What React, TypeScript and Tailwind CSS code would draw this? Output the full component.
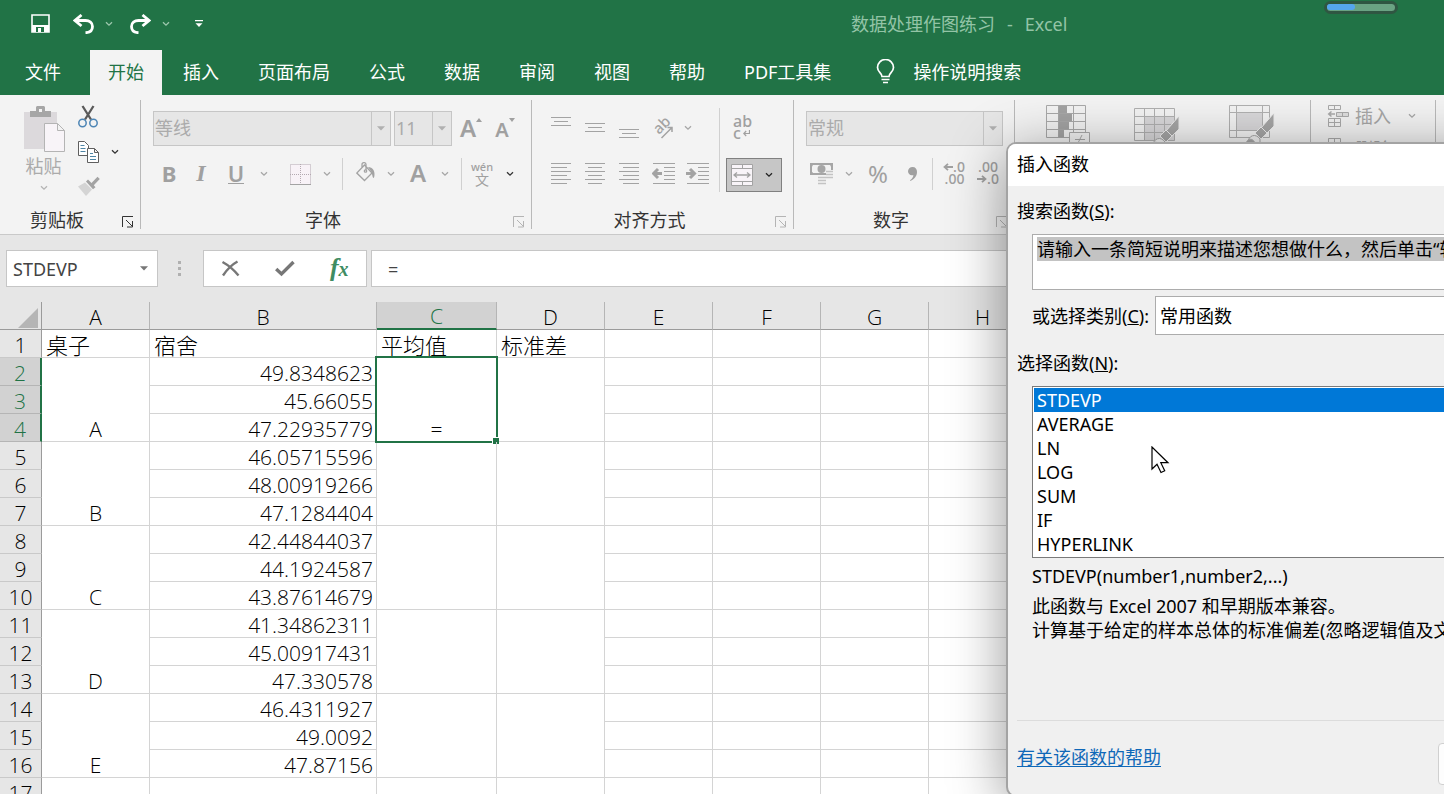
import { useEffect, useRef, useState, type ReactNode } from "react";

const TABS = ["开始", "插入", "页面布局", "公式", "数据", "审阅", "视图", "帮助", "PDF工具集"];

const COLUMNS = [
  { id: "A", width: "w-[108px]" },
  { id: "B", width: "w-[227px]" },
  { id: "C", width: "w-[120px]" },
  { id: "D", width: "w-[108px]" },
  { id: "E", width: "w-[108px]" },
  { id: "F", width: "w-[108px]" },
  { id: "G", width: "w-[108px]" },
  { id: "H", width: "w-[108px]" },
];

// Each desk has three measurements, its own cells are merged over three rows
const DESKS = [
  { name: "A", values: ["49.8348623", "45.66055", "47.22935779"] },
  { name: "B", values: ["46.05715596", "48.00919266", "47.1284404"] },
  { name: "C", values: ["42.44844037", "44.1924587", "43.87614679"] },
  { name: "D", values: ["41.34862311", "45.00917431", "47.330578"] },
  { name: "E", values: ["46.4311927", "49.0092", "47.87156"] },
];

const FUNCTIONS = ["STDEVP", "AVERAGE", "LN", "LOG", "SUM", "IF", "HYPERLINK"];

const UI_FONT = "font-['Noto_Sans','Noto_Sans_CJK_SC',sans-serif]";

function Chevron({ className = "text-[#a6a6a6]" }: { className?: string }) {
  return (
    <svg width="8" height="6" viewBox="0 0 8 6" fill="none" stroke="currentColor" strokeWidth="1.3" className={className}>
      <path d="M1 1.2 4 4.2 7 1.2" />
    </svg>
  );
}

function Caret({ className = "text-[#b0b0b0]" }: { className?: string }) {
  return (
    <svg width="8" height="5" viewBox="0 0 8 5" fill="currentColor" className={className}>
      <path d="M0 .3h8L4 4.5z" />
    </svg>
  );
}

function Tool({ label, className, children }: { label: string; className: string; children: ReactNode }) {
  return (
    <button type="button" aria-label={label} className={`flex h-9 shrink-0 items-center justify-center ${className}`}>
      {children}
    </button>
  );
}

function Divider() {
  return <span className="h-8 w-px shrink-0 bg-[#d0d0d0]" />;
}

function Launcher({ className = "text-[#b4b4b4]" }: { className?: string }) {
  return (
    <svg width="12" height="12" viewBox="0 0 12 12" fill="none" stroke="currentColor" className={className}>
      <path d="M.5 11V.5H11M4 4l6.5 6.5M10.500 5v6H5" />
    </svg>
  );
}

function Group({ label, className, launcher, children }: { label?: string; className: string; launcher?: string; children: ReactNode }) {
  return (
    <section className={`my-[5px] flex shrink-0 flex-col justify-between border-r border-[#b9b9b9] ${className}`}>
      <div className="pl-3">{children}</div>
      {label && (
        <div className="flex h-[18px] items-center">
          <span className="flex-1 pr-2 text-center text-lg leading-5 text-[#333]">{label}</span>
          <button type="button" aria-label={`${label}设置`} className="flex w-[18px] justify-start pt-1">
            <Launcher className={launcher} />
          </button>
        </div>
      )}
    </section>
  );
}

function DropBox({ label, value, className }: { label: string; value: string; className: string }) {
  return (
    <div className={`flex h-[35px] shrink-0 border border-[#c6c6c6] bg-[#e6e6e6] ${className}`}>
      <select aria-label={label} className="min-w-0 flex-1 appearance-none bg-transparent pl-px text-lg text-[#ababab] outline-none">
        <option>{value}</option>
      </select>
      <span className="flex w-[19px] items-center justify-center border-l border-[#c6c6c6]">
        <Caret />
      </span>
    </div>
  );
}

// A stack of lines, each one given as [x start, x end]
function Lines({ rows, top = 0, step = 5 }: { rows: number[][]; top?: number; step?: number }) {
  return (
    <svg width="20" height="21" viewBox="0 0 20 21" stroke="#a3a3a3" shapeRendering="crispEdges">
      {rows.map(([a, b], i) => (
        <path key={i} d={`M${a} ${top + i * step + 0.5}H${b}`} />
      ))}
    </svg>
  );
}

function IndentIcon({ right = false }: { right?: boolean }) {
  return (
    <svg width="23" height="21" viewBox="0 0 23 21" stroke="#a3a3a3">
      <path shapeRendering="crispEdges" d="M1 .5h22M12 4.500h11M12 8.500h11M12 12.500h11M12 16.500h11M1 20.500h22" />
      <path fill="none" strokeWidth="3" d={right ? "M0 10.500h8M4 6l4.500 4.500L4 15" : "M10 10.500H2M6 6l-4.500 4.500L6 15"} />
    </svg>
  );
}

function TitleBar() {
  return (
    <header className="flex h-[50px] items-center pb-[3px] text-white">
      <div className="flex w-[851px] shrink-0 items-center pl-[31px]">
        <button type="button" aria-label="保存">
          <svg width="19" height="19" viewBox="0 0 19 19" fill="none" stroke="#fff" strokeWidth="1.6">
            <path d="M1 1h17v17H1z" />
            <path fill="#fff" stroke="none" d="M1 11h17v7H1z" />
            <path fill="#217346" stroke="none" d="M5 13h8v5H5z" />
            <path fill="#fff" stroke="none" d="M7 14h3v4H7z" />
          </svg>
        </button>
        <button type="button" aria-label="撤消" className="ml-[23px]">
          <svg width="21" height="20" viewBox="0 0 21 20" fill="none" stroke="#fff" strokeWidth="2.800">
            <path d="M8.500 1 2 6.500 8.500 12M2.500 6.500h10c4 0 7 2.500 7 6s-2.500 6-7 6.200" />
          </svg>
        </button>
        <button type="button" aria-label="撤消列表" className="ml-[11px]"><Chevron className="text-[#9cc7ad]" /></button>
        <button type="button" aria-label="恢复" className="ml-[17px]">
          <svg width="21" height="20" viewBox="0 0 21 20" fill="none" stroke="#fff" strokeWidth="2.800">
            <path d="M12.500 1 19 6.500 12.500 12M18.500 6.500h-10c-4 0-7 2.500-7 6s2.500 6 7 6.200" />
          </svg>
        </button>
        <button type="button" aria-label="恢复列表" className="ml-[11px]"><Chevron className="text-[#9cc7ad]" /></button>
        <button type="button" aria-label="自定义快速访问工具栏" className="ml-[25px]">
          <svg width="8" height="8" viewBox="0 0 8 8" fill="#fff"><path d="M0 0h8v1.300H0zM.5 3.200h7L4 7z" /></svg>
        </button>
      </div>
      <h1 className="flex gap-3 text-lg whitespace-nowrap text-[#93c4a6]">
        <span>数据处理作图练习</span>
        <span>-</span>
        <span>Excel</span>
      </h1>
    </header>
  );
}

function TabBar() {
  const [active, setActive] = useState("开始");
  return (
    <nav className="flex h-[45px] items-stretch text-lg text-white">
      <button type="button" className="mr-1 w-[86px] pb-[2px]">文件</button>
      <div className="flex gap-[3px]">
        {TABS.map((tab) => (
          <button
            key={tab}
            type="button"
            onClick={() => setActive(tab)}
            className={`px-[18px] pb-[2px] whitespace-nowrap ${active === tab ? "bg-[#f3f3f3] text-[#217346]" : ""}`}
          >
            {tab}
          </button>
        ))}
      </div>
      <button type="button" className="ml-[27px] flex items-center gap-[18px] pb-[2px] whitespace-nowrap">
        <svg width="19" height="25" viewBox="0 0 19 25" fill="none" stroke="#fff" strokeWidth="1.700">
          <path d="M6 17.500c0-3.500-4.500-4.500-4.500-9a8 8 0 0 1 16 0c0 4.500-4.500 5.500-4.500 9zM5.500 20.500h8M7 23.500h5" />
        </svg>
        操作说明搜索
      </button>
    </nav>
  );
}

function ClipboardGroup() {
  return (
    <Group label="剪贴板" className="w-[141px]" launcher="text-[#333]">
      <div className="flex">
        <button type="button" className="flex w-[63px] flex-col items-center pt-[6px] text-lg leading-6 text-[#ababab]">
          <svg width="42" height="46" viewBox="0 0 42 46">
            <path fill="#dcd9dc" d="M1 6h33v37H1z" />
            <path fill="#a6a6a6" d="M7 5h6V1.500C13 .7 13.700 0 14.500 0h6c.8 0 1.500.7 1.500 1.500V5h6v6H7zM16 3v3h3V3z" />
            <path fill="#f8f4f8" stroke="#b4b4b4" d="M21.500 17.500h13l7 7v21h-20zM34.500 17.500v7h7" />
          </svg>
          <span className="mt-[2px]">粘贴</span>
          <span className="mt-[7px]"><Chevron className="text-[#b4b4b4]" /></span>
        </button>
        <div className="flex flex-col gap-[13px] pt-[5px] pl-[3px]">
          <button type="button" aria-label="剪切">
            <svg width="20" height="23" viewBox="0 0 20 23" fill="none">
              <path stroke="#5a5a5a" strokeWidth="2.300" d="M4.500 1 13 14.500M15.500 1 7 14.500" />
              <circle cx="4.500" cy="18" r="3.700" stroke="#4d85b5" strokeWidth="1.500" />
              <circle cx="15.500" cy="18" r="3.700" stroke="#4d85b5" strokeWidth="1.500" />
            </svg>
          </button>
          <button type="button" aria-label="复制" className="flex items-center gap-3">
            <svg width="21" height="22" viewBox="0 0 21 22" fill="#fff" stroke="#5f5f5f">
              <path d="M.5.5h6l4 4v10H.5z" />
              <path stroke="#4f86a6" d="M2.500 4.500h4M2.500 7.500h5M2.500 10.500h5" />
              <path d="M9.500 7.500h7l4 4v10h-11zM16.500 7.500v4h4" />
              <path stroke="#4f86a6" d="M12 12.500h3M12 15.500h6M12 18.500h6" />
            </svg>
            <Chevron className="text-[#333]" />
          </button>
          <button type="button" aria-label="格式刷">
            <svg width="22" height="21" viewBox="0 0 22 21">
              <path fill="#d4d4d4" d="M0 10.500 7 6.500l7 7L8 20z" />
              <path fill="#a3a3a3" d="m8 5.500 2-2 3.500 3.500L19.500.7l2.300 2.300-6 6.200 1.700 2-2.500 2z" />
            </svg>
          </button>
        </div>
      </div>
    </Group>
  );
}

function FontGroup() {
  return (
    <Group label="字体" className="w-[391px]">
      <div className="flex h-14 items-center">
        <DropBox label="字体名称" value="等线" className="w-[238px]" />
        <DropBox label="字号" value="11" className="ml-[3px] w-[58px]" />
        <Tool label="增大字号" className="ml-1 w-[30px]">
          <span className="text-2xl leading-6 font-semibold text-[#a0a0a0]">A</span>
          <svg width="6" height="4" viewBox="0 0 6 4" className="mb-4" fill="#a0a0a0"><path d="M0 4h6L3 0z" /></svg>
        </Tool>
        <Tool label="减小字号" className="ml-1 w-[30px]">
          <span className="pt-1 text-xl leading-5 font-semibold text-[#a0a0a0]">A</span>
          <svg width="6" height="4" viewBox="0 0 6 4" className="mb-4" fill="#a0a0a0"><path d="M0 0h6L3 4z" /></svg>
        </Tool>
      </div>
      <div className="flex h-9 items-center text-[#a0a0a0]">
        <Tool label="加粗" className="w-8 pb-[2px] text-[22px] font-bold">B</Tool>
        <Tool label="倾斜" className="w-8 pb-[2px] font-['Liberation_Serif',serif] text-2xl font-bold italic">I</Tool>
        <Tool label="下划线" className="w-[38px] pb-[2px]">
          <span className="border-b border-[#a0a0a0] text-[22px] leading-5 font-semibold">U</span>
        </Tool>
        <Tool label="下划线样式" className="w-[18px]"><Chevron /></Tool>
        <Tool label="边框" className="ml-2 w-[38px]">
          <svg width="21" height="21" viewBox="0 0 21 21" fill="none" stroke="#b3a9b0">
            <path fill="#f8f2f7" strokeDasharray="1 1" d="M.5.5h20v20H.5zM10.500 0v20M0 10.500h21" />
            <path stroke="#a3a3a3" d="M0 20.500h21" />
          </svg>
        </Tool>
        <Tool label="边框样式" className="mr-[7px] w-4"><Chevron /></Tool>
        <Divider />
        <Tool label="填充颜色" className="ml-1 w-9 pb-1">
          <svg width="19" height="20" viewBox="0 0 19 20" fill="none" stroke="#a3a3a3" strokeWidth="1.300">
            <path d="m8.500 3 7.500 8-7.500 7.500-7.700-7.500zM6 6V2.500C6 0 10 0 10 2.500V8" />
            <path fill="#a3a3a3" stroke="none" d="M12 5c5 0 6.500 4 6.500 7 0 2.500-.5 4-1 4-1.500-1-1-5-3-7.500z" />
            <circle cx="9.500" cy="9" r="1.200" />
          </svg>
        </Tool>
        <Tool label="填充颜色列表" className="w-4"><Chevron /></Tool>
        <Tool label="字体颜色" className="ml-1 w-[30px] pb-[2px] text-2xl font-semibold">A</Tool>
        <Tool label="字体颜色列表" className="mr-2 ml-1 w-4"><Chevron /></Tool>
        <Divider />
        <Tool label="拼音" className="w-10 flex-col">
          <span className="text-[11px] leading-3 font-medium">wén</span>
          <span className="text-sm leading-[14px]">文</span>
        </Tool>
        <Tool label="拼音列表" className="w-4"><Chevron className="text-[#333]" /></Tool>
      </div>
    </Group>
  );
}

function AlignGroup() {
  const short = [[0, 20], [3, 17], [0, 20]];
  return (
    <Group label="对齐方式" className="w-[262px]">
      <div className="flex">
        <div className="w-[175px]">
          <div className="flex h-14 items-center">
            <Tool label="顶端对齐" className="w-[34px] pb-[2px]"><Lines rows={short} top={0} step={4} /></Tool>
            <Tool label="垂直居中" className="w-[34px] pb-[2px]"><Lines rows={short} top={6} step={4} /></Tool>
            <Tool label="底端对齐" className="w-[34px] pb-[2px]"><Lines rows={short} top={12} step={4} /></Tool>
            <Tool label="方向" className="w-[34px]">
              <svg width="22" height="22" viewBox="0 0 22 22" fill="none" stroke="#a3a3a3" strokeWidth="1.500">
                <path d="M9.500 21 20 10.500M15.500 10.500H20V15" />
                <text x="0" y="0" transform="translate(7 18) rotate(-45)" fontSize="15" fontWeight="500" fill="#a3a3a3" stroke="none">ab</text>
              </svg>
            </Tool>
            <Tool label="方向列表" className="w-4"><Chevron /></Tool>
          </div>
          <div className="flex h-9 items-center">
            <Tool label="左对齐" className="w-[34px] pb-[2px]"><Lines rows={[[0, 20], [0, 16], [0, 20], [0, 16], [0, 20], [0, 16]]} step={4} /></Tool>
            <Tool label="居中" className="w-[34px] pb-[2px]"><Lines rows={[[0, 20], [3, 17], [0, 20], [3, 17], [0, 20], [3, 17]]} step={4} /></Tool>
            <Tool label="右对齐" className="w-[34px] pb-[2px]"><Lines rows={[[0, 20], [4, 20], [0, 20], [4, 20], [0, 20], [4, 20]]} step={4} /></Tool>
            <Tool label="减少缩进量" className="w-[34px] pb-[2px]"><IndentIcon /></Tool>
            <Tool label="增加缩进量" className="w-[34px] pb-[2px]"><IndentIcon right /></Tool>
          </div>
        </div>
        <span className="mt-2 w-px bg-[#d0d0d0]" />
        <div className="pl-[6px]">
          <div className="flex h-14 items-center">
            <Tool label="自动换行" className="w-8 flex-col items-start pb-[2px] pl-[7px] text-base font-medium text-[#a0a0a0]">
              <span className="leading-3">ab</span>
              <span className="flex items-center gap-[2px] leading-3">
                c
                <svg width="7" height="7" viewBox="0 0 7 7" fill="none" stroke="currentColor" strokeWidth="1.200"><path d="M6.500 0v3.500H1M3.200 1 .8 3.500 3.200 6" /></svg>
              </span>
            </Tool>
          </div>
          <button type="button" aria-label="合并后居中" className="mt-[2px] flex h-[34px] w-14 items-center gap-3 border border-[#808080] bg-[#c6c6c6] pl-1">
            <svg width="22" height="22" viewBox="0 0 22 22" fill="#f8f4f8" stroke="#a3a3a3">
              <path d="M.5.500h21v21H.5zM0 4.500h22M0 17.500h22M11.500 0v4.500M11.500 17.500V22" />
              <path strokeWidth="1.300" d="M3 11h16M6 8.500 3 11l3 2.500M16 8.500l3 2.500-3 2.500" fill="none" />
            </svg>
            <Chevron className="text-[#222]" />
          </button>
        </div>
      </div>
    </Group>
  );
}

function NumberGroup() {
  return (
    <Group label="数字" className="w-[221px]">
      <div className="flex h-14 items-center">
        <DropBox label="数字格式" value="常规" className="w-[197px]" />
      </div>
      <div className="flex h-9 items-center text-[#a0a0a0]">
        <Tool label="会计数字格式" className="w-8">
          <svg width="24" height="22" viewBox="0 0 24 22">
            <path fill="#a6a6a6" d="M0 0h23v12H0z" />
            <path fill="#f3f3f3" d="M3 2h17l1 1.500v5L20 10H3L2 8.500v-5z" />
            <circle cx="11.500" cy="6" r="4" fill="#a6a6a6" />
            <path stroke="#f3f3f3" strokeWidth="4" d="M8 15h10M16 9h8" />
            <path stroke="#c3c3c3" strokeWidth="1.500" d="M16 8.500h7M16 11.500h7M16 14.500h7M8 14.500h8M8 17.500h8M8 20.500h8" />
          </svg>
        </Tool>
        <Tool label="会计数字格式列表" className="w-[22px]"><Chevron /></Tool>
        <Tool label="百分比样式" className="w-9 text-2xl">%</Tool>
        <Tool label="千位分隔样式" className="mr-1 w-8">
          <svg width="9" height="14" viewBox="0 0 9 14" fill="#a0a0a0"><path d="M4.500 0C7.500 0 9 2 9 5c0 4-3 7.500-6.500 9L2 13.200C4.500 11.500 5.500 9.500 5.300 8 2.500 9 0 7 0 4.300 0 2 2 0 4.500 0z" /></svg>
        </Tool>
        <Divider />
        <Tool label="增加小数位数" className="ml-1 w-[34px] flex-col pb-[2px] text-sm font-medium">
          <span className="flex items-center leading-3">
            <svg width="10" height="8" viewBox="0 0 10 8" fill="none" stroke="currentColor" strokeWidth="1.800"><path d="M10 4H2M5 .8 1.500 4 5 7.200" /></svg>
            .0
          </span>
          <span className="pl-px leading-3">.00</span>
        </Tool>
        <Tool label="减少小数位数" className="w-[34px] flex-col pb-[2px] text-sm font-medium">
          <span className="leading-3">.00</span>
          <span className="flex items-center leading-3">
            <svg width="10" height="8" viewBox="0 0 10 8" fill="none" stroke="currentColor" strokeWidth="1.800"><path d="M0 4h8M5 .8 8.500 4 5 7.200" /></svg>
            .0
          </span>
        </Tool>
      </div>
    </Group>
  );
}

function Brush() {
  return (
    <>
      <path fill="#a6a6a6" stroke="#f0f0f0" d="M45 8v13l-7 7-6-5z" />
      <path fill="#a6a6a6" stroke="#f0f0f0" d="m32 22 6 6-6 6-6-6z" />
      <path fill="#f0f0f0" stroke="#a6a6a6" d="M19 38c0-8 8-10 12-4v4z" />
      <path fill="#a6a6a6" d="M17 38c2-5 7-5 9 0z" />
    </>
  );
}

function StylesGroup() {
  return (
    <Group className="w-[296px]">
      <div className="flex items-start pt-[5px] pl-[19px]">
        <button type="button" aria-label="条件格式">
          <svg width="45" height="38" viewBox="0 0 45 38" fill="none" stroke="#a9a9a9">
            <path fill="#f3f3f3" d="M.5.500h39v32H.5zM.5 8.500h39M.5 16.500h39M.5 24.500h39M12.500.5v32M27.500.5v32" />
            <path fill="#a3a3a3" stroke="none" d="M13 1h8v7h-8zM13 9h13v7H13zM13 17h10v7H13zM13 25h5v7h-5z" />
            <path fill="#f3f3f3" d="M23.500 27.500h20v14h-20zM29 34.500h10M36 30l-5 10" />
          </svg>
        </button>
        <button type="button" aria-label="套用表格格式" className="ml-[43px] pt-[3px]">
          <svg width="46" height="38" viewBox="0 0 46 38" fill="none" stroke="#b0b0b0">
            <path fill="#d9d8da" stroke="none" d="M11 9h30v24H11z" />
            <path d="M.5.500h40v32H.5zM.5 8.500h40M.5 16.500h40M.5 24.500h40M10.500.5v32M20.500.5v32M30.500.5v32" />
            <Brush />
          </svg>
        </button>
        <button type="button" aria-label="单元格样式" className="ml-[49px]">
          <svg width="46" height="38" viewBox="0 0 46 38" fill="none" stroke="#b0b0b0">
            <path fill="#d9d8da" stroke="none" d="M8 8h26v18H8z" />
            <path d="M.5.500h40v32H.5zM.5 7.500h40M.5 25.500h40M7.500.5v32M33.500.5v32" />
            <Brush />
          </svg>
        </button>
      </div>
    </Group>
  );
}

function CellsIcon() {
  return (
    <svg width="23" height="22" viewBox="0 0 23 22" fill="none" stroke="#a9a9a9">
      <path d="M1.500.5h12v4h-12zM7.500.5v4M1.500 13.500h12v8h-12zM1.500 17.500h12M7.500 13.500v8" />
      <path fill="#dedede" d="M9.500 7.500h12v4h-12zM15.500 7.500v4" />
      <path strokeWidth="1.500" d="M8 9H2M4.500 6.500 1.700 9l2.800 2.500" />
    </svg>
  );
}

function CellsGroup() {
  return (
    <Group className="w-[125px]">
      <div className="flex flex-col gap-[9px] pt-1 pl-1 text-lg leading-6 text-[#a6a6a6]">
        {["插入", "删除"].map((name) => (
          <button key={name} type="button" className="flex items-center gap-[5px] whitespace-nowrap">
            <CellsIcon />
            {name}
            <Chevron className="ml-3 text-[#a6a6a6]" />
          </button>
        ))}
      </div>
    </Group>
  );
}

function FormulaBar() {
  const box = "flex h-[37px] shrink-0 items-center border border-[#c6c6c6] bg-white";
  return (
    <div className="flex items-center py-[15px] pl-[6px] text-[#444]">
      <div className={`${box} w-[152px]`}>
        <input aria-label="名称框" defaultValue="STDEVP" className="min-w-0 flex-1 pl-[6px] text-lg outline-none" />
        <button type="button" aria-label="名称列表" className="px-[9px]"><Caret className="text-[#777]" /></button>
      </div>
      <svg width="45" height="16" viewBox="0 0 45 16" fill="#b0b0b0">
        <path d="M20 0h3v3h-3zM20 6h3v3h-3zM20 12h3v3h-3z" />
      </svg>
      <div className={`${box} w-[164px] justify-around`}>
        <button type="button" aria-label="取消">
          <svg width="19" height="17" viewBox="0 0 19 17" fill="none" stroke="#777" strokeWidth="2.400"><path d="M1.500 2C7 5 13 10 17.500 15.500M16.500 1.500C11 4.500 6 9.500 2 15.500" /></svg>
        </button>
        <button type="button" aria-label="输入">
          <svg width="20" height="17" viewBox="0 0 20 17" fill="none" stroke="#777" strokeWidth="3.400"><path d="M1.200 9 6.500 14 18.500 2" /></svg>
        </button>
        <button type="button" aria-label="插入函数" className="font-['Liberation_Serif',serif] text-[26px] leading-7 font-bold text-[#3f8c62] italic">
          f<span className="text-xl">x</span>
        </button>
      </div>
      <div className={`${box} ml-1 flex-1 shrink`}>
        <input aria-label="编辑栏" defaultValue="=" className="min-w-0 flex-1 pl-4 text-lg outline-none" />
      </div>
    </div>
  );
}

const CELL = "h-7 border-r border-b border-[#d4d4d4] pt-1";

function RowHead({ row }: { row: number }) {
  const picked = row >= 2 && row <= 4;
  return (
    <th
      scope="row"
      className={`h-7 border-b px-0 pt-1 pb-0 text-center font-light ${picked ? "border-r-2 border-r-[#217346] border-b-[#b5b5b5] bg-[#d2d2d2] text-[#217346]" : "border-r border-r-[#9b9b9b] border-b-[#c9c9c9] bg-[#e6e6e6]"}`}
    >
      {row}
    </th>
  );
}

function EmptyCells({ from }: { from: number }) {
  return (
    <>
      {COLUMNS.slice(from).map((c) => <td key={c.id} className={`${CELL} p-0`} />)}
      <td className={`${CELL} p-0`} />
    </>
  );
}

function Sheet() {
  return (
    <table className="w-full table-fixed border-separate border-spacing-0 bg-white font-['Open_Sans','Noto_Sans_CJK_SC',sans-serif] text-[21px] leading-[23px] font-light text-black">
      <colgroup>
        <col className="w-[42px]" />
        {COLUMNS.map((c) => <col key={c.id} className={c.width} />)}
        <col />
      </colgroup>
      <thead>
        <tr className="bg-[#e6e6e6]">
          <td className="h-7 border-r border-b border-[#9b9b9b] p-0">
            <svg width="20" height="20" viewBox="0 0 20 20" className="mt-1 mr-[3px] ml-auto" fill="#b5b5b5"><path d="M20 0v20H0z" /></svg>
          </td>
          {COLUMNS.map((c) => (
            <th
              key={c.id}
              scope="col"
              className={`h-7 border-r border-r-[#b5b5b5] p-0 text-center font-light ${c.id === "C" ? "border-b-2 border-b-[#217346] bg-[#d2d2d2] text-[#217346]" : "border-b border-b-[#9b9b9b]"}`}
            >
              <div className="h-[26px] leading-[29px]">{c.id}</div>
            </th>
          ))}
          <td className="border-b border-[#9b9b9b]" />
        </tr>
      </thead>
      <tbody>
        <tr>
          <RowHead row={1} />
          {["桌子", "宿舍", "平均值", "标准差"].map((name) => (
            <td key={name} className={`${CELL} pl-1 text-[22px] leading-[23px]`}>{name}</td>
          ))}
          <EmptyCells from={4} />
        </tr>
        {DESKS.map((desk, d) =>
          desk.values.map((value, i) => (
            <tr key={value}>
              <RowHead row={2 + d * 3 + i} />
              {i === 0 && <td rowSpan={3} className={`${CELL} text-center align-bottom`}>{desk.name}</td>}
              <td className={`${CELL} pr-[3px] text-right`}>{value}</td>
              {i === 0 && (
                <td rowSpan={3} className={`${CELL} relative text-center align-bottom`}>
                  {d === 0 && (
                    <>
                      =
                      <span className="absolute -inset-[2px] border-2 border-[#217346]" />
                      <span className="absolute -right-[3px] -bottom-[3px] size-[7px] border-t border-l border-white bg-[#217346]" />
                    </>
                  )}
                </td>
              )}
              {i === 0 && <td rowSpan={3} className={CELL} />}
              <EmptyCells from={4} />
            </tr>
          )),
        )}
        <tr>
          <RowHead row={17} />
          <EmptyCells from={0} />
        </tr>
      </tbody>
    </table>
  );
}

function InsertFunctionDialog() {
  const [selected, setSelected] = useState("STDEVP");
  const search = useRef<HTMLTextAreaElement | null>(null);

  // The hint is selected when the dialog opens, typing replaces it
  useEffect(() => {
    search.current?.focus({ preventScroll: true });
    search.current?.select();
  }, []);

  return (
    <div
      role="dialog"
      aria-labelledby="dialog-title"
      className="absolute top-[142px] -right-20 left-[1006px] overflow-hidden rounded-[10px] border-2 border-[#a3a3a3] bg-[#f0f0f0] text-lg leading-6 text-black shadow-[0_10px_56px_rgba(0,0,0,0.42)]"
    >
      <h2 id="dialog-title" className="flex h-[42px] items-center bg-white pb-[3px] pl-[9px]">插入函数</h2>
      <div className="pr-4 pl-[9px]">
        <label htmlFor="search" className="block pt-[13px]">搜索函数(<u>S</u>):</label>
        <textarea
          id="search"
          ref={search}
          wrap="off"
          defaultValue={"请输入一条简短说明来描述您想做什么\uff0c然后单击“转到”"}
          className="mt-[11px] ml-[15px] block h-14 w-[calc(100%-15px)] resize-none overflow-hidden border border-[#acacac] bg-white px-1 pt-[2px] outline-none selection:bg-[#c3c3c3] selection:text-black"
        />
        <div className="mt-[6px] ml-[15px] flex items-center gap-[6px]">
          <label htmlFor="category">或选择类别(<u>C</u>):</label>
          <select id="category" className="h-[39px] flex-1 appearance-none border border-[#acacac] bg-white pl-1 outline-none">
            <option>常用函数</option>
          </select>
        </div>
        <p id="list-label" className="mt-4">选择函数(<u>N</u>):</p>
        <ul role="listbox" aria-labelledby="list-label" className="mt-[11px] ml-[15px] border border-[#7a7a7a] bg-white p-px">
          {FUNCTIONS.map((name) => (
            <li
              key={name}
              role="option"
              aria-selected={selected === name}
              onClick={() => setSelected(name)}
              className={`pl-[3px] ${selected === name ? "bg-[#0078d7] text-white" : ""}`}
            >
              {name}
            </li>
          ))}
        </ul>
        <div className="mt-[6px] ml-[15px] h-[156px] whitespace-nowrap">
          <p>STDEVP(number1,number2,...)</p>
          <p className="mt-[6px]">此函数与 Excel 2007 和早期版本兼容。</p>
          <p>计算基于给定的样本总体的标准偏差(忽略逻辑值及文本)</p>
        </div>
        <div className="flex items-start justify-between border-t border-[#dcdcdc] pt-[22px] pb-[10px]">
          <a href="#help" className="mt-[2px] text-[#0f68b8] underline underline-offset-2">有关该函数的帮助</a>
          <button type="button" aria-label="确定" className="h-[42px] w-[68px] rounded border border-[#d0d0d0] bg-[#fdfdfd]" />
        </div>
      </div>
      <svg width="19" height="29" viewBox="0 0 19 29" className="absolute top-[302px] left-[143px]" fill="#fff" stroke="#000" strokeWidth="1.200">
        <path d="M1 1v22l5-4.800 4 8.300 3.700-1.700-3.900-8.100H17z" />
      </svg>
    </div>
  );
}

export default function App() {
  return (
    <div className={`relative h-screen overflow-hidden bg-[#e6e6e6] ${UI_FONT}`}>
      <div className="bg-[#217346]">
        <TitleBar />
        <TabBar />
      </div>
      <div className="flex h-[140px] overflow-hidden border-b border-[#c9c9c9] bg-[#f3f3f3]">
        <ClipboardGroup />
        <FontGroup />
        <AlignGroup />
        <NumberGroup />
        <StylesGroup />
        <CellsGroup />
      </div>
      <FormulaBar />
      <Sheet />
      <InsertFunctionDialog />
      <div className="absolute top-px right-[46px] h-[13px] w-[74px] rounded-full border-[3px] border-[#2f5642] bg-[#6aa383]">
        <div className="h-[6px] w-7 rounded-full bg-[#55a5ee]" />
      </div>
    </div>
  );
}
